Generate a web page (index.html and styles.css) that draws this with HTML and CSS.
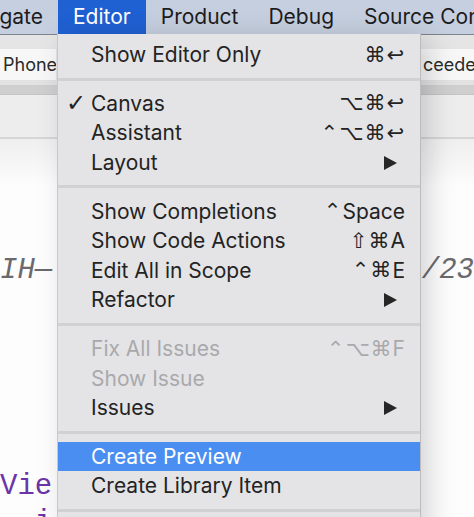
FILE: index.html
```html
<!DOCTYPE html>
<html>
<head>
<meta charset="utf-8">
<link rel="stylesheet" href="styles.css">
</head>
<body>
<div class="screen">
  <div class="menubar">
    <span class="mb-item first">gate</span>
    <span class="mb-item active">Editor</span>
    <span class="mb-item">Product</span>
    <span class="mb-item">Debug</span>
    <span class="mb-item">Source Control</span>
  </div>
  <div class="toolbar">
    <div class="field field-left">Phone</div>
    <div class="field field-right">ceeded</div>
  </div>
  <div class="tabbar"></div>
  <div class="jumpbar"></div>
  <div class="subbar"></div>
  <div class="code">
    <div class="line comment"><span>IH—</span><span>/23</span></div>
    <div class="line"></div>
    <div class="line"></div>
    <div class="line"></div>
    <div class="line"></div>
    <div class="line"></div>
    <div class="line type"><span>Vie</span></div>
    <div class="line type"><span>  i</span></div>
  </div>

  <div class="menu">
    <div class="item"><span class="label">Show Editor Only</span><span class="keys"><span class="sym">⌘↩</span></span></div>
    <div class="sep"></div>
    <div class="item"><span class="check">✓</span><span class="label">Canvas</span><span class="keys"><span class="sym">⌥⌘↩</span></span></div>
    <div class="item"><span class="label">Assistant</span><span class="keys"><span class="sym">⌃⌥⌘↩</span></span></div>
    <div class="item"><span class="label">Layout</span><span class="arrow"></span></div>
    <div class="sep"></div>
    <div class="item"><span class="label">Show Completions</span><span class="keys"><span class="sym">⌃</span> Space</span></div>
    <div class="item"><span class="label">Show Code Actions</span><span class="keys"><span class="sym">⇧⌘</span>A</span></div>
    <div class="item"><span class="label">Edit All in Scope</span><span class="keys"><span class="sym">⌃⌘</span>E</span></div>
    <div class="item"><span class="label">Refactor</span><span class="arrow"></span></div>
    <div class="sep"></div>
    <div class="item disabled"><span class="label">Fix All Issues</span><span class="keys"><span class="sym">⌃⌥⌘</span>F</span></div>
    <div class="item disabled"><span class="label">Show Issue</span></div>
    <div class="item"><span class="label">Issues</span><span class="arrow"></span></div>
    <div class="sep"></div>
    <div class="item selected"><span class="label">Create Preview</span></div>
    <div class="item"><span class="label">Create Library Item</span></div>
    <div class="sep"></div>
  </div>
</div>
</body>
</html>
```

FILE: styles.css
```css
* { box-sizing: border-box; }
html, body { margin: 0; padding: 0; }
body { width: 474px; height: 517px; overflow: hidden; background: #fdfdfd; }

.screen {
  position: relative;
  width: 474px;
  height: 517px;
  overflow: hidden;
  font-family: "Inter", "Noto Sans", sans-serif;
}

.menubar {
  height: 35px;
  background: #c6cfdf;
  border-bottom: 1px solid #7d838e;
  display: flex;
  align-items: stretch;
  white-space: nowrap;
  font-size: 21px;
  color: #1c1c1e;
}
.mb-item {
  padding: 0 15px;
  display: flex;
  align-items: center;
  padding-bottom: 2px;
}
.mb-item.first { padding-left: 0; width: 58px; justify-content: flex-end; }
.mb-item.active { background: #1f60d2; color: #ffffff; }

.toolbar {
  height: 45px;
  background: #e5e5e5;
  display: flex;
  justify-content: space-between;
  align-items: flex-start;
  padding-top: 14px;
}
.field {
  height: 31px;
  background: #f7f7f7;
  display: flex;
  align-items: center;
  font-size: 18px;
  color: #2a2a2a;
  white-space: nowrap;
  overflow: hidden;
}
.field-left { width: 56px; padding-left: 3px; }
.field-right { width: 54px; padding-left: 3px; }

.tabbar {
  height: 5px;
  background: #e2e2e2;
}
.jumpbar {
  height: 10px;
  background: #cfcfcf;
  border-bottom: 1px solid #c4c4c4;
}
.subbar {
  height: 44px;
  background: #ededed;
  border-bottom: 2px solid #d6d6d6;
}

.code {
  background: linear-gradient(#efefef 0, #f7f7f7 30px, #fdfdfd 47px);
  padding-top: 114px;
  font-family: "Liberation Mono", "DejaVu Sans Mono", monospace;
  font-size: 29px;
}
.line {
  height: 36px;
  line-height: 36px;
  display: flex;
  justify-content: space-between;
  white-space: pre;
}
.comment { color: #6a6a6e; font-style: italic; }
.type { color: #6b35a8; }

.menu {
  position: absolute;
  left: 57px;
  top: 34px;
  width: 364px;
  height: 500px;
  padding-top: 6px;
  background: #e4e4e6;
  border-left: 1px solid #c8c8ca;
  border-right: 1px solid #bcbcbe;
  box-shadow: 8px 4px 26px rgba(0, 0, 0, 0.17);
  font-size: 21px;
  color: #232323;
  white-space: nowrap;
}
.item {
  position: relative;
  height: 29.6px;
  display: flex;
  align-items: center;
  padding: 0 15px 0 33px;
}
.item .label { flex: 1; }
.check {
  position: absolute;
  left: 8px;
  font-family: "DejaVu Sans", sans-serif;
  font-weight: bold;
  font-size: 24px;
}
.keys { display: flex; align-items: center; gap: 0; }
.sym {
  font-family: "DejaVu Sans", sans-serif;
  font-size: 21px;
  letter-spacing: 1px;
}
.arrow {
  width: 0;
  height: 0;
  margin-right: 8px;
  border-left: 13px solid #262626;
  border-top: 7px solid transparent;
  border-bottom: 7px solid transparent;
}
.disabled { color: #a9a9ac; }
.selected { background: #4a8ef2; color: #ffffff; }
.sep {
  height: 19px;
  display: flex;
  align-items: center;
}
.sep::after {
  content: "";
  width: 100%;
  height: 3px;
  background: #d1d1d3;
}
```
